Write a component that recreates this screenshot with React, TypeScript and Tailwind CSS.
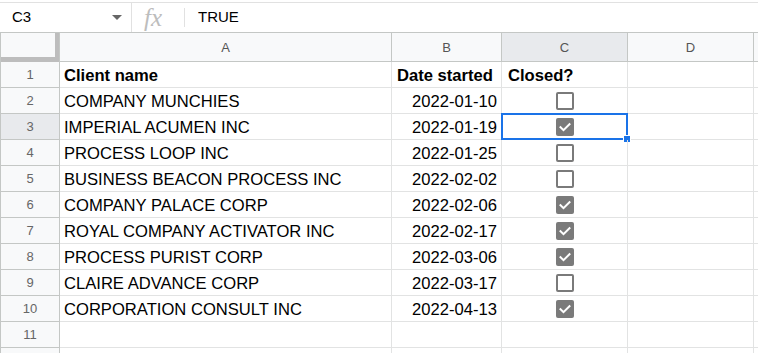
import React from "react";

type Row = { name: string; date: string; closed: boolean };

const rows: Row[] = [
  { name: "COMPANY MUNCHIES", date: "2022-01-10", closed: false },
  { name: "IMPERIAL ACUMEN INC", date: "2022-01-19", closed: true },
  { name: "PROCESS LOOP INC", date: "2022-01-25", closed: false },
  { name: "BUSINESS BEACON PROCESS INC", date: "2022-02-02", closed: false },
  { name: "COMPANY PALACE CORP", date: "2022-02-06", closed: true },
  { name: "ROYAL COMPANY ACTIVATOR INC", date: "2022-02-17", closed: true },
  { name: "PROCESS PURIST CORP", date: "2022-03-06", closed: true },
  { name: "CLAIRE ADVANCE CORP", date: "2022-03-17", closed: false },
  { name: "CORPORATION CONSULT INC", date: "2022-04-13", closed: true },
];

function Checkbox({ checked }: { checked: boolean }) {
  if (checked) {
    return (
      <div className="w-[18px] h-[18px] rounded-[2px] bg-[#7a7a7a] flex items-center justify-center">
        <svg width="14" height="14" viewBox="0 0 14 14" fill="none">
          <path d="M2.5 7.2l3 3 6-6" stroke="white" strokeWidth="2" strokeLinecap="square" />
        </svg>
      </div>
    );
  }
  return <div className="w-[18px] h-[18px] rounded-[2px] border-2 border-[#7a7a7a]" />;
}

function RowHeader({ n, active }: { n?: number; active?: boolean }) {
  return (
    <div
      className={`w-[60px] shrink-0 h-full flex items-center justify-center pt-px border-l border-r border-b border-[#c4c7c5] text-[13px] text-[#666] ${
        active ? "bg-[#e8eaed]" : "bg-[#f8f9fa]"
      }`}
    >
      {n}
    </div>
  );
}

export default function App() {
  return (
    <div className="w-[758px] h-[353px] overflow-hidden bg-white font-['Liberation_Sans',Arial,sans-serif] text-black">
      {/* formula bar */}
      <div className="mt-[2px] h-[30px] border-t border-[#e1e1e1] flex items-stretch">
        <div className="w-[132px] flex items-center pl-[12px] pr-[9px] border-r border-[#e1e1e1]">
          <span className="text-[15px] flex-1">C3</span>
          <svg width="10" height="5" viewBox="0 0 10 5">
            <path d="M0 0h10L5 5z" fill="#666" />
          </svg>
        </div>
        <div className="w-[52px] flex items-center">
          <span className="ml-[12px] font-['Liberation_Serif',serif] italic text-[25px] text-[#bdbdbd] leading-none">fx</span>
        </div>
        <div className="flex items-center">
          <div className="w-px h-[19px] bg-[#e1e1e1]" />
          <span className="ml-[13px] text-[15px]">TRUE</span>
        </div>
      </div>

      {/* column headers */}
      <div className="h-[30px] flex border-t border-[#c4c7c5] text-[13px] text-[#555]">
        <div className="w-[60px] shrink-0 flex border-l border-[#c4c7c5]">
          <div className="w-[58px] h-full bg-[#f8f9fa] border-r-4 border-b-[5px] border-[#bdbdbd]" />
          <div className="w-px h-full bg-[#c4c7c5]" />
        </div>
        <div className="w-[332px] shrink-0 flex items-center justify-center pt-px bg-[#f8f9fa] border-r border-b border-[#c4c7c5]">A</div>
        <div className="w-[110px] shrink-0 flex items-center justify-center pt-px bg-[#f8f9fa] border-r border-b border-[#c4c7c5]">B</div>
        <div className="w-[126px] shrink-0 flex items-center justify-center pt-px bg-[#e8eaed] border-r border-b border-[#c4c7c5]">C</div>
        <div className="w-[126px] shrink-0 flex items-center justify-center pt-px bg-[#f8f9fa] border-r border-b border-[#c4c7c5]">D</div>
        <div className="flex-1 bg-[#f8f9fa] border-b border-[#c4c7c5]" />
      </div>

      {/* header row */}
      <div className="h-[26px] flex text-[16.6px]">
        <RowHeader n={1} />
        <div className="w-[332px] shrink-0 flex items-center pl-[4px] pt-[4px] font-bold border-r border-b border-[#e2e3e3]">Client name</div>
        <div className="w-[110px] shrink-0 flex items-center pl-[5px] pt-[4px] font-bold border-r border-b border-[#e2e3e3]">Date started</div>
        <div className="w-[126px] shrink-0 flex items-center pl-[6px] pt-[4px] font-bold border-r border-b border-[#e2e3e3]">Closed?</div>
        <div className="w-[126px] shrink-0 border-r border-b border-[#e2e3e3]" />
        <div className="flex-1 border-b border-[#e2e3e3]" />
      </div>

      {rows.map((r, i) => (
        <div key={r.name} className="h-[26px] flex text-[16.6px]">
          <RowHeader n={i + 2} active={i === 1} />
          <div className="w-[332px] shrink-0 flex items-center pl-[4px] pt-[4px] border-r border-b border-[#e2e3e3] whitespace-nowrap">{r.name}</div>
          <div className="w-[110px] shrink-0 flex items-center justify-end pr-[4px] pt-[4px] border-r border-b border-[#e2e3e3]">{r.date}</div>
          <div className="w-[126px] shrink-0 relative flex items-center justify-center border-r border-b border-[#e2e3e3]">
            <Checkbox checked={r.closed} />
            {i === 1 && (
              <div className="absolute -top-px -left-px -right-px -bottom-px border-2 border-[#1a73e8]">
                <div className="absolute -right-[5px] -bottom-[5px] w-[8px] h-[8px] bg-[#1a73e8] border border-white" />
              </div>
            )}
          </div>
          <div className="w-[126px] shrink-0 border-r border-b border-[#e2e3e3]" />
          <div className="flex-1 border-b border-[#e2e3e3]" />
        </div>
      ))}

      {[11, 0].map((n) => (
        <div key={n} className="h-[26px] flex">
          <RowHeader n={n || undefined} />
          <div className="w-[332px] shrink-0 border-r border-b border-[#e2e3e3]" />
          <div className="w-[110px] shrink-0 border-r border-b border-[#e2e3e3]" />
          <div className="w-[126px] shrink-0 border-r border-b border-[#e2e3e3]" />
          <div className="w-[126px] shrink-0 border-r border-b border-[#e2e3e3]" />
          <div className="flex-1 border-b border-[#e2e3e3]" />
        </div>
      ))}
    </div>
  );
}
